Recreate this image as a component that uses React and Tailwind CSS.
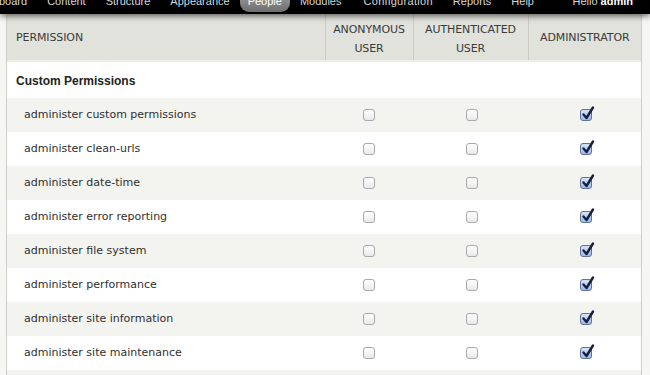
import React from "react";

const rows = [
  "administer custom permissions",
  "administer clean-urls",
  "administer date-time",
  "administer error reporting",
  "administer file system",
  "administer performance",
  "administer site information",
  "administer site maintenance",
  "administer site settings",
];

function Unchecked() {
  return (
    <span className="inline-block w-[12px] h-[12px] rounded-[3px] border border-[#a9a9a9] bg-gradient-to-b from-[#ffffff] to-[#e9e9e9] shadow-[inset_0_1px_0_#fff] align-middle" />
  );
}

function Checked() {
  return (
    <span className="relative inline-block w-[12px] h-[12px] rounded-[3px] border border-[#5f73a0] bg-gradient-to-b from-[#d6e4fa] to-[#9cb9e6] align-middle">
      <svg
        className="absolute left-[1px] top-[-4px] overflow-visible"
        width="13"
        height="14"
        viewBox="0 0 13 14"
      >
        <path
          d="M1.5 8.5 L4.5 12 L11 1.5"
          fill="none"
          stroke="#16203a"
          strokeWidth="2.4"
          strokeLinecap="round"
          strokeLinejoin="round"
        />
      </svg>
    </span>
  );
}

const navItems = [
  "board",
  "Content",
  "Structure",
  "Appearance",
  "People",
  "Modules",
  "Configuration",
  "Reports",
  "Help",
];

export default function App() {
  return (
    <div className="w-[650px] h-[375px] overflow-hidden bg-[#f6f6f4] relative font-['DejaVu_Sans',sans-serif]">
      <div className="relative z-10 h-[14px] bg-black overflow-hidden shadow-[0_2px_6px_rgba(0,0,0,0.6)]">
        <div className="flex items-start mt-[-8px] ml-[-11px] font-['Liberation_Sans',sans-serif] text-[11px] leading-[14px] text-[#d8d8d8]">
          {navItems.map((n) =>
            n === "People" ? (
              <span
                key={n}
                className="px-[8px] pt-[2px] pb-[4px] rounded-[9px] bg-gradient-to-b from-[#a0a0a0] to-[#6e6e6e] text-white"
              >
                {n}
              </span>
            ) : n === "Configuration" ? (
              <span key={n} className="ml-[2px] px-[10px] py-[2px] tracking-[0.3px]">
                {n}
              </span>
            ) : (
              <span key={n} className="px-[10px] py-[2px]">
                {n}
              </span>
            )
          )}
          <span className="ml-auto mr-[17px] py-[2px]">
            Hello <b className="text-white">admin</b>
          </span>
        </div>
      </div>

      <div className="ml-[6px] w-[636px] border-l border-r border-[#cfcfca] bg-white">
        <table className="w-[634px] table-fixed border-collapse text-[11px] text-[#333]">
          <colgroup>
            <col className="w-[318px]" />
            <col className="w-[88px]" />
            <col className="w-[115px]" />
            <col className="w-[113px]" />
          </colgroup>
          <thead>
            <tr className="h-[47px] bg-[#e1e2dc] border-b-[2px] border-[#eeeee9] text-[#3b3b3b] tracking-[-0.1px]">
              <th className="text-left font-normal pl-[9px] pt-[2px]">PERMISSION</th>
              <th className="font-normal leading-[19px] border-l border-[#cbcbc5] pt-[3px]">
                ANONYMOUS
                <br />
                USER
              </th>
              <th className="font-normal leading-[19px] border-l border-[#cbcbc5] pt-[3px]">
                AUTHENTICATED
                <br />
                USER
              </th>
              <th className="font-normal border-l border-[#cbcbc5] pt-[2px]">ADMINISTRATOR</th>
            </tr>
          </thead>
          <tbody>
            <tr className="h-[37px] bg-white">
              <td
                colSpan={4}
                className="pl-[9px] pt-[2px] font-bold font-['Liberation_Sans',sans-serif] text-[12px] text-[#222]"
              >
                Custom Permissions
              </td>
            </tr>
            {rows.map((r, i) => (
              <tr key={r} className={`h-[34px] ${i % 2 === 0 ? "bg-[#f3f3ef]" : "bg-white"}`}>
                <td className="pl-[17px] text-[#2f2f2f]">{r}</td>
                <td className="text-center">
                  <Unchecked />
                </td>
                <td className="text-center pl-[2px]">
                  <Unchecked />
                </td>
                <td className="text-center pl-[3px]">
                  <Checked />
                </td>
              </tr>
            ))}
          </tbody>
        </table>
      </div>
    </div>
  );
}
